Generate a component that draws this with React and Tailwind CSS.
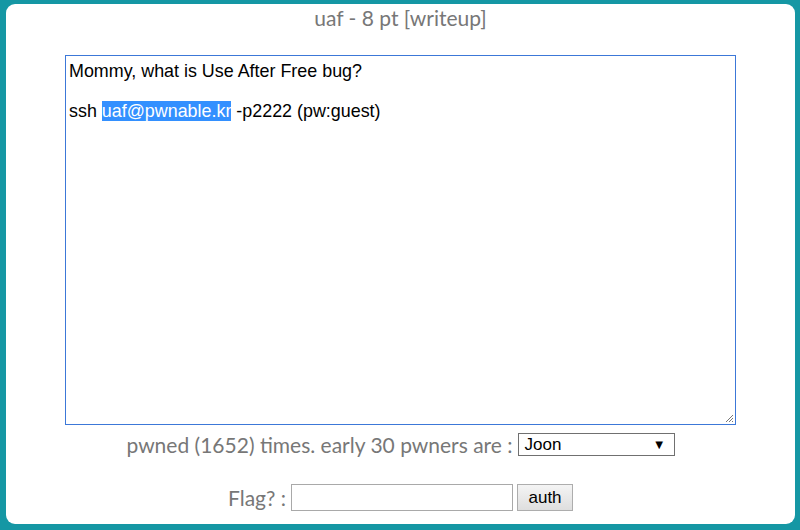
import React from "react";

export default function App() {
  return (
    <div className="w-[800px] h-[530px] bg-[#1597a4] pt-[4px] pl-[6px] pr-[5px] pb-[6px]">
      <div className="w-full h-full bg-white rounded-[9px] flex flex-col items-center font-['Lato',sans-serif] text-[#777]">
        <div className="text-[21px] leading-[28px]">
          uaf - 8 pt [writeup]
        </div>
        <div className="relative mt-[23px] w-[671px] h-[370px] border border-[#3c78d8] pt-[5px] px-[3px] font-['Liberation_Sans',Arial,sans-serif] text-[17.9px] leading-[20px] text-black">
          <div>Mommy, what is Use After Free bug?</div>
          <div className="h-[20px]"></div>
          <div>
            ssh <span className="bg-[#3390ff] text-white">uaf@pwnable.kr</span> -p2222 (pw:guest)
          </div>
          <svg className="absolute right-[1px] bottom-[1px]" width="10" height="10" viewBox="0 0 10 10">
            <path d="M9 2 L2 9 M9 5 L5 9 M9 8 L8 9" stroke="#777" strokeWidth="1" />
          </svg>
        </div>
        <div className="mt-[8px] flex items-center h-[23px]">
          <span className="text-[21px] leading-[23px]">pwned (1652) times. early 30 pwners are :</span>
          <div className="ml-[5px] w-[157px] h-[23px] border border-[#707070] flex items-center justify-between pl-[6px] pr-[8px] font-['Liberation_Sans',Arial,sans-serif] text-[17px] text-black bg-white">
            <span>Joon</span>
            <span className="text-[13px]">▼</span>
          </div>
        </div>
        <div className="mt-[28px] flex items-center h-[27px]">
          <span className="text-[21px] leading-[27px]">Flag? :</span>
          <div className="ml-[5px] w-[222px] h-[27px] border border-[#a9a9a9] bg-white"></div>
          <div className="ml-[4px] w-[56px] h-[27px] border border-[#adadad] bg-gradient-to-b from-[#f4f4f4] to-[#dedede] flex items-center justify-center font-['Liberation_Sans',Arial,sans-serif] text-[17px] text-black">
            auth
          </div>
        </div>
      </div>
    </div>
  );
}
